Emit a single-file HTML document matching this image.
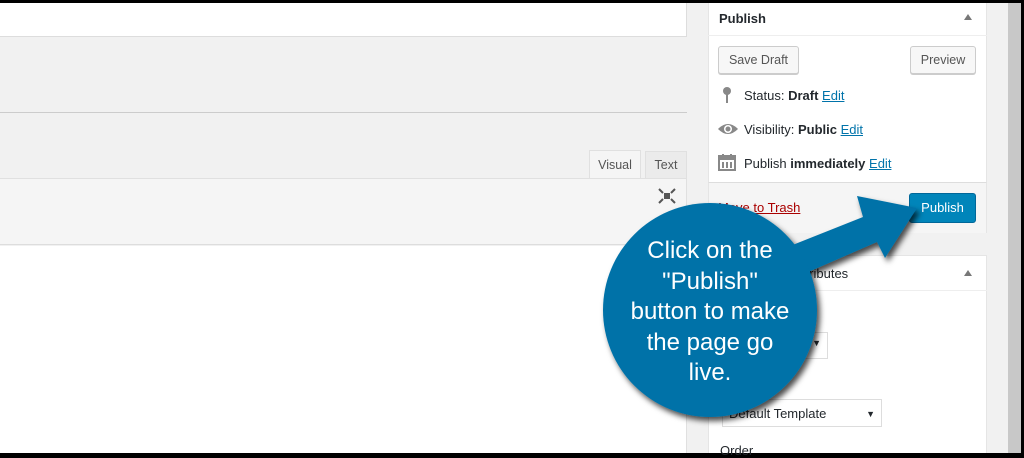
<!DOCTYPE html><html><head><style>
*{margin:0;padding:0;box-sizing:border-box}
body{width:1024px;height:456px;background:#000;position:relative;overflow:hidden;font-family:"Liberation Sans",sans-serif;font-size:13px;color:#23282d}
.a{position:absolute}
.btn{position:absolute;background:#f7f7f7;border:1px solid #ccc;border-radius:3px;box-shadow:0 1px 0 #ccc;color:#555;font-size:12.5px;text-align:center;line-height:26px}
a{color:#0073aa;text-decoration:underline}
</style></head><body>
<div class="a" style="left:0;top:3px;width:1021px;height:450px;background:#f1f1f1"></div>
<div class="a" style="left:1008px;top:3px;width:13px;height:450px;background:#c8c8c8"></div>
<div class="a" style="left:0;top:3px;width:687px;height:34px;background:#fff;border:1px solid #ddd;border-top:none;border-left:none"></div>
<div class="a" style="left:0;top:112px;width:687px;height:1px;background:#ccc"></div>
<div class="a" style="left:589px;top:150px;width:52px;height:29px;background:#f5f5f5;border:1px solid #e0e0e0;border-bottom:none;font-size:12.5px;color:#555;text-align:center;line-height:28px">Visual</div>
<div class="a" style="left:645px;top:151px;width:42px;height:27px;background:#ebebeb;border:1px solid #e0e0e0;border-bottom:none;font-size:12.5px;color:#555;text-align:center;line-height:27px">Text</div>
<div class="a" style="left:0;top:178px;width:687px;height:67px;background:#f5f5f5;border-top:1px solid #e0e0e0;border-bottom:1px solid #ddd;border-right:1px solid #e0e0e0"></div>
<svg class="a" style="left:658px;top:188px" width="18" height="16" viewBox="0 0 18 16"><rect x="6" y="5" width="6" height="6" fill="#555"/><path d="M1 1l4 4M17 1l-4 4M1 15l4-4M17 15l-4-4" stroke="#555" stroke-width="2"/></svg>
<div class="a" style="left:0;top:246px;width:687px;height:207px;background:#fff;border-right:1px solid #e0e0e0"></div>
<div class="a" style="left:708px;top:3px;width:279px;height:230px;background:#fff;border:1px solid #e5e5e5;border-top:none"></div>
<div class="a" style="left:719px;top:11px;font-size:13px;font-weight:bold;color:#23282d">Publish</div>
<div class="a" style="left:964px;top:14px;width:0;height:0;border:4px solid transparent;border-bottom:6px solid #777;border-top:none"></div>
<div class="a" style="left:708px;top:35px;width:279px;height:1px;background:#eee"></div>
<div class="btn" style="left:718px;top:46px;width:81px;height:28px">Save Draft</div>
<div class="btn" style="left:910px;top:46px;width:66px;height:28px">Preview</div>
<svg class="a" style="left:721px;top:86px" width="12" height="18" viewBox="0 0 12 18"><circle cx="6" cy="5" r="4" fill="#888"/><rect x="5" y="7" width="2" height="10" fill="#888"/></svg>
<div class="a" style="left:744px;top:88px">Status: <b>Draft</b> <a>Edit</a></div>
<svg class="a" style="left:717px;top:122px" width="22" height="14" viewBox="0 0 22 14"><path d="M1 7Q11-3 21 7Q11 17 1 7Z" fill="#888"/><circle cx="11" cy="7" r="4" fill="#fff"/><circle cx="11" cy="7" r="2.5" fill="#888"/></svg>
<div class="a" style="left:744px;top:122px">Visibility: <b>Public</b> <a>Edit</a></div>
<svg class="a" style="left:718px;top:153px" width="18" height="18" viewBox="0 0 18 18"><rect x="1" y="3" width="16" height="14" fill="none" stroke="#888" stroke-width="2"/><rect x="1" y="3" width="16" height="4" fill="#888"/><path d="M5 9v6M9 9v6M13 9v6M5 1v4M13 1v4" stroke="#888" stroke-width="2"/></svg>
<div class="a" style="left:744px;top:156px">Publish <b>immediately</b> <a>Edit</a></div>
<div class="a" style="left:708px;top:182px;width:279px;height:51px;background:#f5f5f5;border-top:1px solid #ddd;border-left:1px solid #e5e5e5;border-right:1px solid #e5e5e5"></div>
<div class="a" style="left:718px;top:200px"><a style="color:#a00">Move to Trash</a></div>
<div class="a" style="left:909px;top:193px;width:67px;height:30px;background:#0085ba;border:1px solid #006799;border-radius:3px;color:#fff;text-align:center;line-height:28px;font-size:13px">Publish</div>
<div class="a" style="left:708px;top:255px;width:279px;height:198px;background:#fff;border:1px solid #e5e5e5;border-bottom:none"></div>
<div class="a" style="left:708px;top:290px;width:279px;height:1px;background:#eee"></div>
<div class="a" style="left:964px;top:270px;width:0;height:0;border:4px solid transparent;border-bottom:6px solid #777;border-top:none"></div>
<div class="a" style="left:760px;top:266px">Page Attributes</div>
<div class="a" style="left:720px;top:332px;width:108px;height:27px;border:1px solid #ddd;background:#fff"><span class="a" style="right:6px;top:5px;font-size:9px">▼</span></div>
<div class="a" style="left:722px;top:399px;width:160px;height:28px;border:1px solid #ddd;background:#fff;font-size:13px;line-height:28px;padding-left:6px">Default Template<span class="a" style="right:6px;top:0;font-size:9px">▼</span></div>
<div class="a" style="left:720px;top:443px">Order</div>
<svg class="a" style="left:0;top:0" width="1024" height="456">
<defs><filter id="s" x="-20%" y="-20%" width="140%" height="140%"><feDropShadow dx="3" dy="4" stdDeviation="3" flood-color="#000" flood-opacity="0.7"/></filter></defs>
<g filter="url(#s)" fill="#0472a8">
<polygon points="780,250 863,217 857,196 917,208 885,258 877,242 790,280"/>
<circle cx="710" cy="310" r="107"/>
</g>
</svg>
<div class="a" style="left:603px;top:236px;width:214px;text-align:center;color:#fff;font-size:24px;line-height:30.5px">Click on the<br>"Publish"<br>button to make<br>the page go<br>live.</div>
</body></html>
